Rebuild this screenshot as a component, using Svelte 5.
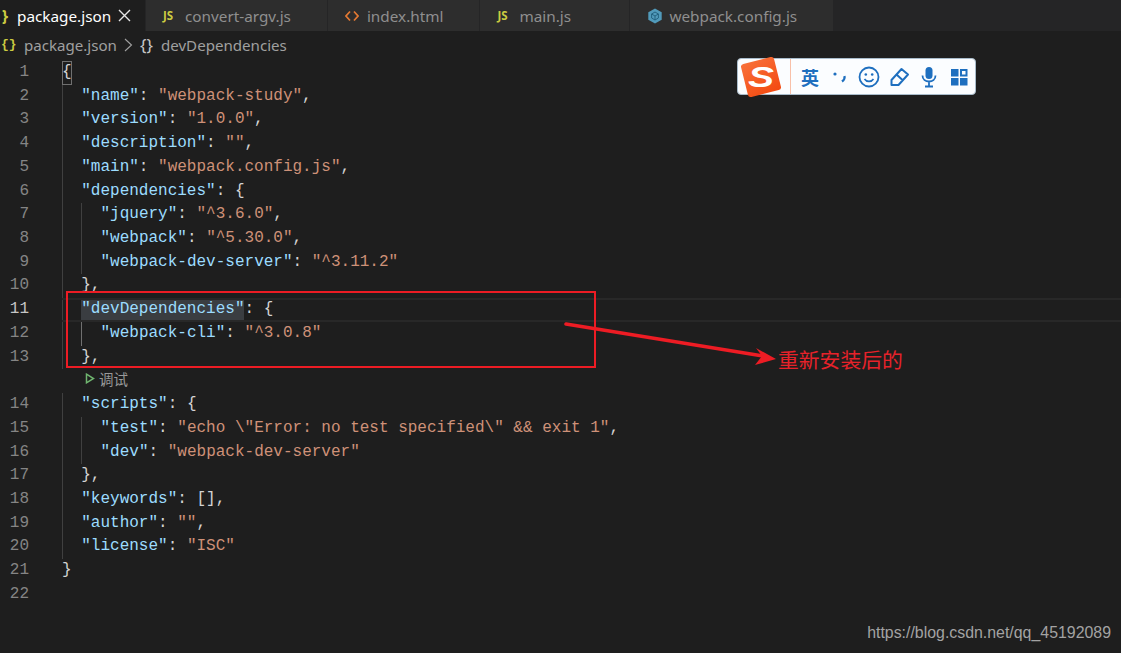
<script lang="ts">
  // editor lines: indent = guide levels, parts = [class, text]
  const k = "key", s = "str", p = "pun";
  const lines = [
    { n: 1, indent: 0, parts: [["first", "{"]] },
    { n: 2, indent: 1, parts: [[k, '"name"'], [p, ": "], [s, '"webpack-study"'], [p, ","]] },
    { n: 3, indent: 1, parts: [[k, '"version"'], [p, ": "], [s, '"1.0.0"'], [p, ","]] },
    { n: 4, indent: 1, parts: [[k, '"description"'], [p, ": "], [s, '""'], [p, ","]] },
    { n: 5, indent: 1, parts: [[k, '"main"'], [p, ": "], [s, '"webpack.config.js"'], [p, ","]] },
    { n: 6, indent: 1, parts: [[k, '"dependencies"'], [p, ": {"]] },
    { n: 7, indent: 2, parts: [[k, '"jquery"'], [p, ": "], [s, '"^3.6.0"'], [p, ","]] },
    { n: 8, indent: 2, parts: [[k, '"webpack"'], [p, ": "], [s, '"^5.30.0"'], [p, ","]] },
    { n: 9, indent: 2, parts: [[k, '"webpack-dev-server"'], [p, ": "], [s, '"^3.11.2"']] },
    { n: 10, indent: 1, parts: [[p, "},"]] },
    { n: 11, indent: 1, parts: [["key sel", '"devDependencies"'], [p, ": {"]], current: true },
    { n: 12, indent: 2, parts: [[k, '"webpack-cli"'], [p, ": "], [s, '"^3.0.8"']], active: true },
    { n: 13, indent: 1, parts: [[p, "},"]], lens: true },
    { n: 14, indent: 1, parts: [[k, '"scripts"'], [p, ": {"]] },
    { n: 15, indent: 2, parts: [[k, '"test"'], [p, ": "], [s, '"echo \\"Error: no test specified\\" && exit 1"'], [p, ","]] },
    { n: 16, indent: 2, parts: [[k, '"dev"'], [p, ": "], [s, '"webpack-dev-server"']] },
    { n: 17, indent: 1, parts: [[p, "},"]] },
    { n: 18, indent: 1, parts: [[k, '"keywords"'], [p, ": [],"]] },
    { n: 19, indent: 1, parts: [[k, '"author"'], [p, ": "], [s, '""'], [p, ","]] },
    { n: 20, indent: 1, parts: [[k, '"license"'], [p, ": "], [s, '"ISC"']] },
    { n: 21, indent: 0, parts: [[p, "}"]] },
    { n: 22, indent: 0, parts: [] },
  ];
  const tabs = [
    { name: "convert-argv.js", icon: "js" },
    { name: "index.html", icon: "html" },
    { name: "main.js", icon: "js" },
    { name: "webpack.config.js", icon: "cube" },
  ];
</script>

<div class="window">
  <div class="tabs">
    <div class="tab current">
      <span class="clipped">&#125;</span>
      <span class="tab-name">package.json</span>
      <svg class="close" width="13" height="13" viewBox="0 0 13 13"><path d="M1 1l11 11M12 1L1 12" stroke="#e6e6e6" stroke-width="1.4" fill="none" /></svg>
    </div>
    {#each tabs as tab}
      <div class="tab">
        <span class="tab-icon">
          {#if tab.icon === "js"}
            <span class="js">JS</span>
          {:else if tab.icon === "html"}
            <svg width="14" height="12" viewBox="0 0 14 12"><path d="M5 1.5L1 6l4 4.5M9 1.5L13 6l-4 4.5" stroke="#e37933" stroke-width="1.7" fill="none" /></svg>
          {:else}
            <svg width="16" height="16" viewBox="0 0 16 16"><path d="M8 .5l6.7 3.8v7.4L8 15.5l-6.7-3.8V4.300z" fill="#519aba" /><path d="M8 4l3.400 2v4L8 12l-3.400-2V6zM4.600 6L8 8l3.400-2M8 8v4" stroke="#1f5e7a" stroke-width=".9" fill="none" /></svg>
          {/if}
        </span>
        <span>{tab.name}</span>
      </div>
    {/each}
  </div>

  <div class="crumbs">
    <span class="crumb-json">&#123;&#125;</span>
    <span>package.json</span>
    <svg width="9" height="14" viewBox="0 0 9 14"><path d="M1 1l6.500 6L1 13" stroke="#a0a0a0" stroke-width="1.100" fill="none" /></svg>
    <span class="crumb-obj">&#123;&#125;</span>
    <span>devDependencies</span>
  </div>

  <div class="editor">
    {#each lines as line}
      <div class="row">
        <span class="num" class:on={line.current}>{line.n}</span>
        <code class="code" class:current={line.current}>
          {#each Array(line.indent) as _, i}
            <span class="guide" class:lit={line.active && i === 1}></span>
          {/each}
          {#each line.parts as part}<span class={part[0]}>{part[1]}</span>{/each}
        </code>
      </div>
      {#if line.lens}
        <div class="lens">
          <svg width="10" height="11" viewBox="0 0 10 11"><path d="M1.500 1.200L8.500 5.500 1.500 9.800z" stroke="#6fb56f" stroke-width="1.500" fill="none" /></svg>
          <span>调试</span>
        </div>
      {/if}
    {/each}
  </div>

  <div class="redbox"></div>
  <svg class="arrow" width="230" height="50" viewBox="0 0 230 50">
    <path d="M3 3L200 35" stroke="#ed1c24" stroke-width="3.600" stroke-linecap="round" fill="none" />
    <path d="M213 38L193 27 199 35 192 44z" fill="#ed1c24" />
  </svg>
  <div class="note">重新安装后的</div>

  <div class="ime">
    <div class="logo"><span>S</span></div>
    <div class="ime-sep"></div>
    <span class="ime-lang">英</span>
    <svg width="16" height="16" viewBox="0 0 16 16"><circle cx="3" cy="5" r="1.600" fill="#1e6fbf" /><path d="M12.500 7c.5 2-.5 4-2.500 5.500" stroke="#1e6fbf" stroke-width="2.200" fill="none" /></svg>
    <svg width="22" height="22" viewBox="0 0 22 22"><circle cx="11" cy="11" r="9.500" stroke="#1e6fbf" stroke-width="1.800" fill="none" /><circle cx="7.800" cy="8.500" r="1.300" fill="#1e6fbf" /><circle cx="14.200" cy="8.500" r="1.300" fill="#1e6fbf" /><path d="M6.500 13c2 3.200 7 3.200 9 0" stroke="#1e6fbf" stroke-width="1.600" fill="none" /></svg>
    <svg width="20" height="20" viewBox="0 0 20 20"><path d="M1.500 13l10-11 6.500 5.500-9.500 10.500H1.500zM6.500 7.500l6 5.500" stroke="#1e6fbf" stroke-width="2" fill="none" stroke-linejoin="round" /></svg>
    <svg width="16" height="22" viewBox="0 0 16 22"><rect x="4.500" y="1" width="7" height="12" rx="3.500" fill="#1e6fbf" /><path d="M1.500 9.500c0 8 13 8 13 0M8 16v4M4 20.500h8" stroke="#1e6fbf" stroke-width="1.800" fill="none" /></svg>
    <svg width="18" height="18" viewBox="0 0 18 18"><rect x="1" y="1" width="7.500" height="7.500" fill="#1e6fbf" /><rect x="11" y="2" width="5.500" height="5.500" stroke="#1e6fbf" stroke-width="2" fill="none" /><rect x="1" y="10" width="7.500" height="7.500" fill="#1e6fbf" /><rect x="10" y="10" width="7.500" height="7.500" fill="#1e6fbf" /></svg>
  </div>

  <div class="mark">https://blog.csdn.net/qq_45192089</div>
</div>

<style>
  :global(body) {
    margin: 0;
    background: #1e1e1e;
  }

  .window {
    position: relative;
    width: 1121px;
    height: 653px;
    overflow: hidden;
    background: #1e1e1e;
    font-family: "Noto Sans", "Open Sans", sans-serif;
  }

  .tabs {
    display: flex;
    height: 31px;
    background: #252526;
  }

  .tab {
    display: flex;
    align-items: center;
    box-sizing: border-box;
    min-width: 150px;
    padding: 0 36px 0 17px;
    border-right: 1px solid #252526;
    background: #2d2d2d;
    color: #8f8f8f;
    font-size: 15.300px;
  }

  .tab.current {
    width: 146px;
    min-width: 0;
    padding: 0;
    background: #1e1e1e;
    color: #fff;
  }

  .clipped {
    width: 17px;
    padding-left: 2px;
    box-sizing: border-box;
    color: #cbcb41;
    font-weight: 700;
  }

  .tab-name {
    width: 101px;
  }

  .tab-icon {
    display: flex;
    align-items: center;
    width: 22px;
    flex: none;
  }

  .js {
    color: #cbcb41;
    font-size: 11.500px;
    font-weight: 700;
  }

  .crumbs {
    display: flex;
    align-items: center;
    gap: 7px;
    height: 27px;
    padding: 0 0 3px 1px;
    color: #a0a0a0;
    font-size: 15.100px;
  }

  .crumb-json {
    width: 16px;
    color: #cbcb41;
    font: 700 13px "Liberation Mono", monospace;
  }

  .crumb-obj {
    width: 14px;
    color: #c8c8c8;
    font: 400 17px "Noto Sans", sans-serif;
  }

  .row {
    display: flex;
    height: 23.730px;
  }

  .num {
    box-sizing: border-box;
    flex: none;
    width: 62px;
    padding-right: 33px;
    color: #858585;
    font: 16px/23.730px "Liberation Mono", monospace;
    text-align: right;
  }

  .num.on {
    color: #c6c6c6;
  }

  .code {
    display: flex;
    flex: 1;
    box-sizing: border-box;
    color: #d4d4d4;
    font: 16px/23.730px "Liberation Mono", monospace;
    white-space: pre;
  }

  .code.current {
    border-top: 2px solid #282828;
    border-bottom: 2px solid #282828;
    line-height: 18.730px;
  }

  .guide {
    box-sizing: border-box;
    width: 19.260px;
    flex: none;
    border-left: 1px solid #404040;
  }

  .guide.lit {
    border-left-color: #707070;
  }

  .key {
    color: #9cdcfe;
  }

  .str {
    color: #ce9178;
  }

  .pun {
    color: #d4d4d4;
  }

  .sel {
    height: 19.730px;
    background: #3a3d41;
  }

  .first {
    box-sizing: border-box;
    width: 10px;
    outline: 1px solid #707070;
    outline-offset: -1px;
    color: #d4d4d4;
  }

  .lens {
    display: flex;
    align-items: center;
    gap: 4px;
    box-sizing: border-box;
    height: 23.730px;
    padding: 0 0 5px 85px;
    color: #999;
    font: 14.500px/18px "Noto Sans CJK SC", sans-serif;
  }

  .redbox {
    position: absolute;
    left: 66px;
    top: 291px;
    box-sizing: border-box;
    width: 530px;
    height: 77px;
    border: 2px solid #ed1c24;
  }

  .arrow {
    position: absolute;
    left: 563px;
    top: 321px;
  }

  .note {
    position: absolute;
    left: 778px;
    top: 345px;
    color: #e6222a;
    font: 20.800px/28px "Noto Sans CJK SC", sans-serif;
  }

  .ime {
    position: absolute;
    left: 737px;
    top: 58px;
    display: flex;
    align-items: center;
    box-sizing: border-box;
    width: 239px;
    height: 37px;
    border: 1px solid #a9bccb;
    border-radius: 4px;
    background: #fbfdff;
  }

  .ime svg {
    flex: none;
  }

  .logo {
    display: flex;
    align-items: center;
    justify-content: center;
    flex: none;
    width: 34px;
    height: 34px;
    margin-left: 6px;
    border-radius: 3px;
    background: linear-gradient(160deg, #f8703a, #f34a10);
    transform: rotate(-14deg);
  }

  .logo span {
    color: #fff;
    font: italic 900 30px/32px "Liberation Sans", sans-serif;
    transform: rotate(14deg) scaleX(1.300);
  }

  .ime-sep {
    flex: none;
    width: 1px;
    height: 35px;
    margin: 0 10px 0 12px;
    background: #f8c0a8;
  }

  .ime-lang {
    flex: none;
    width: 19px;
    margin-right: 12px;
    color: #1e6fbf;
    font: 700 18px "Noto Sans CJK SC", sans-serif;
  }

  .ime svg:nth-of-type(1) { margin-right: 10px; }
  .ime svg:nth-of-type(2) { margin-right: 10px; }
  .ime svg:nth-of-type(3) { margin-right: 11px; }
  .ime svg:nth-of-type(4) { margin-right: 13px; }

  .mark {
    position: absolute;
    right: 10px;
    top: 624px;
    color: #a3a3a3;
    font: 15.900px/18px "Liberation Sans", sans-serif;
  }
</style>
